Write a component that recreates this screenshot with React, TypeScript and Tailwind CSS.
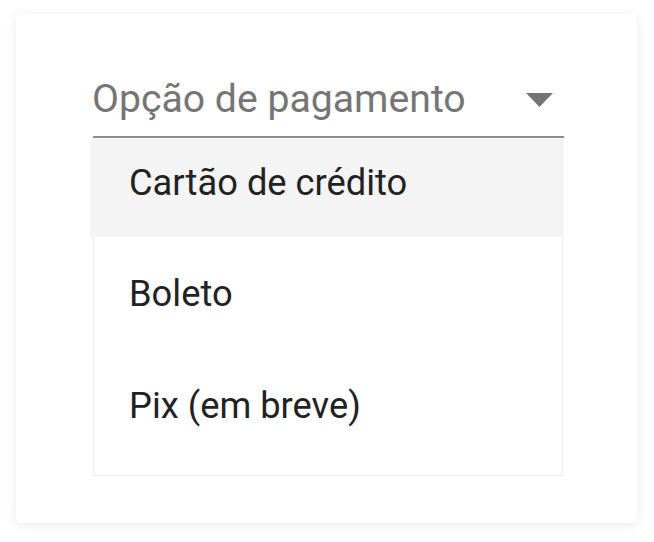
import React from "react"

const options = ["Cartão de crédito", "Boleto", "Pix (em breve)"]

export default function App() {
  return (
    <div className="min-h-[542px] w-[654px] bg-white pt-[14px] pl-[16px] font-['Roboto',sans-serif]">
      <div className="w-[621px] h-[509px] rounded-[5px] bg-white shadow-[0_2px_12px_rgba(0,0,0,0.09)] pt-[66px] pl-[77px]">
        <div className="w-[471px]">
          {/* Select trigger */}
          <div className="flex h-[58px] justify-between border-b-2 border-[#8c8c8c]">
            <span className="-ml-[1px] text-[39.2px] leading-[39px] text-[#757575]">Opção de pagamento</span>
            <svg width="27" height="14" viewBox="0 0 27 14" className="mt-[13px] mr-[11px]">
              <polygon points="0,0 27,0 13.5,14" fill="#757575" />
            </svg>
          </div>

          {/* Options list */}
          <div className="mt-px w-[470px] border border-[#eeeeee] pb-[14px] text-[36.3px] leading-[36px] text-[#222222]">
            {options.map((opt, i) => (
              <div
                key={opt}
                className={
                  i === 0
                    ? "-ml-[4px] h-[97px] bg-[#f4f4f4] pt-[25px] pl-[39px]"
                    : "h-[112px] pt-[39px] pl-[35px]"
                }
              >
                {opt}
              </div>
            ))}
          </div>
        </div>
      </div>
    </div>
  )
}
